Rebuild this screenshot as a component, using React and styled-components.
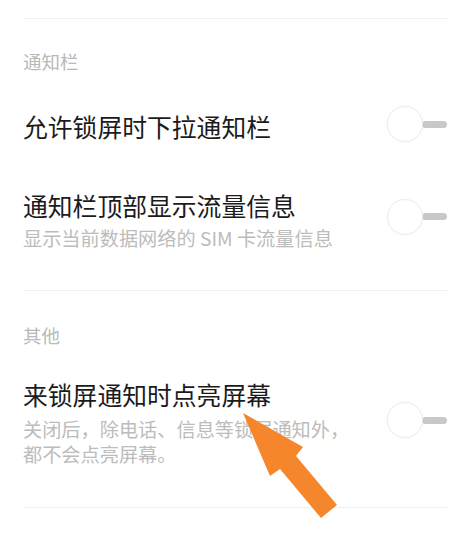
import React from "react";
import styled, { createGlobalStyle } from "styled-components";

const Global = createGlobalStyle`
  html, body { margin: 0; padding: 0; background: #ffffff; }
  body { font-family: "Noto Sans CJK SC", "Noto Sans", sans-serif; }
`;

const Page = styled.div`
  position: relative;
  width: 466px;
  height: 549px;
  overflow: hidden;
  box-sizing: border-box;
  padding: 18px 19px 0 23px;
  background: #fff;
`;

const Divider = styled.div`
  height: 1px;
  background: #efefef;
  margin-top: ${(p) => p.$mt || 0}px;
`;

const SectionHeader = styled.div`
  font-size: 18.5px;
  line-height: 26px;
  color: #b9b9b9;
  margin-top: ${(p) => p.$mt}px;
`;

const Row = styled.div`
  display: flex;
  align-items: center;
  justify-content: space-between;
  margin-top: ${(p) => p.$mt}px;
`;

const TextCol = styled.div`
  display: flex;
  flex-direction: column;
`;

const Title = styled.div`
  font-size: 24.8px;
  line-height: 34px;
  color: #1b1b1b;
`;

const Sub = styled.div`
  font-size: 19.2px;
  line-height: 25px;
  color: #bcbcbc;
  margin-top: ${(p) => p.$mt ?? 4}px;
`;

const Toggle = styled.div`
  display: flex;
  align-items: center;
  width: 60px;
  flex-shrink: 0;
  transform: translateY(${(p) => p.$dy || 0}px);
`;

const Knob = styled.div`
  width: 34px;
  height: 34px;
  border-radius: 50%;
  border: 1px solid #ececec;
  background: #fff;
  box-shadow: 0 0 2px rgba(0, 0, 0, 0.04);
  position: relative;
  z-index: 1;
`;

const Track = styled.div`
  width: 25px;
  height: 7px;
  border-radius: 4px;
  background: #c8c8c8;
  margin-left: -1px;
`;

const Arrow = styled.svg`
  position: absolute;
  left: 0;
  top: 0;
  pointer-events: none;
`;

function Switch({ dy }) {
  return (
    <Toggle $dy={dy}>
      <Knob />
      <Track />
    </Toggle>
  );
}

export default function App() {
  return (
    <>
      <Global />
      <Page>
        <Divider />
        <SectionHeader $mt={29}>通知栏</SectionHeader>
        <Row $mt={34}>
          <TextCol>
            <Title>允许锁屏时下拉通知栏</Title>
          </TextCol>
          <Switch dy={-2} />
        </Row>
        <Row $mt={44}>
          <TextCol>
            <Title>通知栏顶部显示流量信息</Title>
            <Sub>显示当前数据网络的 SIM 卡流量信息</Sub>
          </TextCol>
          <Switch dy={-3} />
        </Row>
        <Divider $mt={39} />
        <SectionHeader $mt={31}>其他</SectionHeader>
        <Row $mt={29}>
          <TextCol>
            <Title>来锁屏通知时点亮屏幕</Title>
            <Sub $mt={6}>
              关闭后，除电话、信息等锁屏通知外，
              <br />
              都不会点亮屏幕。
            </Sub>
          </TextCol>
          <Switch dy={-2} />
        </Row>
        <Divider $mt={40} />
        <Arrow width="466" height="549" viewBox="0 0 466 549">
          <polygon
            points="243,413 303,447 296,456 337,505 321,518 280,469 270,476"
            fill="#f6862c"
          />
        </Arrow>
      </Page>
    </>
  );
}
